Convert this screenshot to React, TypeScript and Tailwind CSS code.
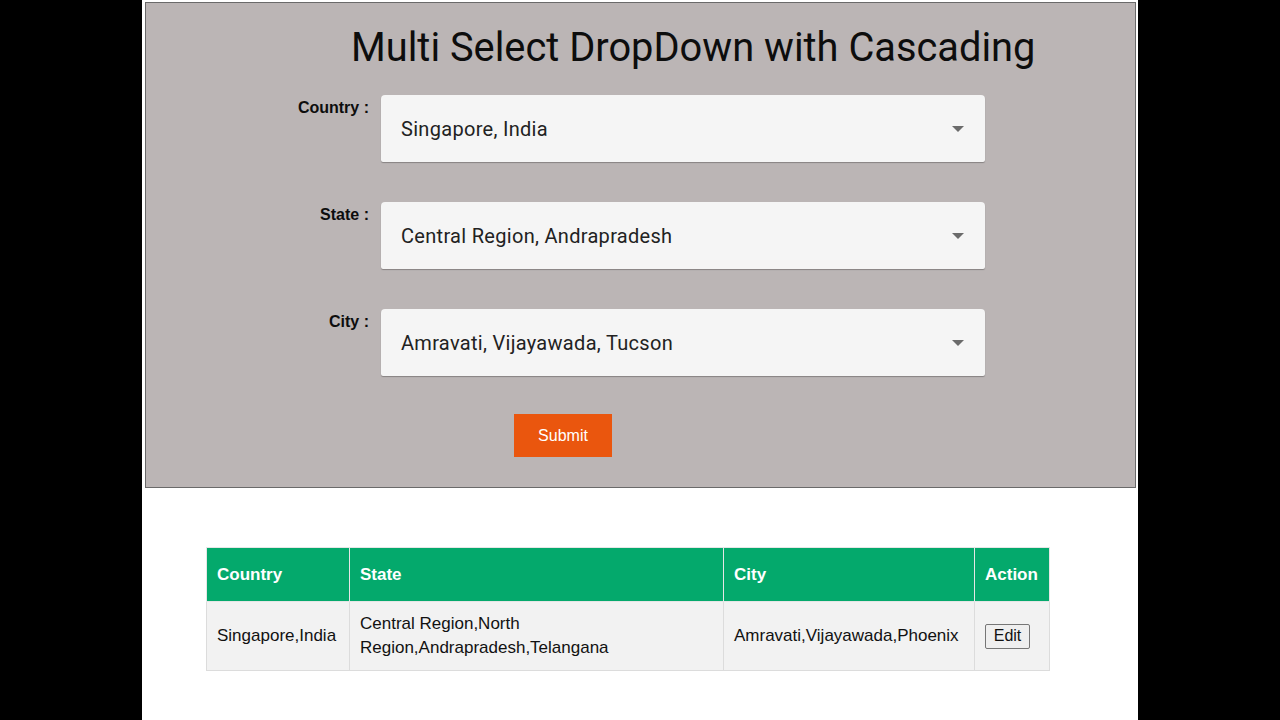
import { useState } from "react";

const fields = [
  { label: "Country :", value: "Singapore, India" },
  { label: "State :", value: "Central Region, Andrapradesh" },
  { label: "City :", value: "Amravati, Vijayawada, Tucson" },
];

const rows = [
  {
    country: "Singapore,India",
    state: "Central Region,North Region,Andrapradesh,Telangana",
    city: "Amravati,Vijayawada,Phoenix",
  },
];

function SelectBox({ value }: { value: string }) {
  return (
    <div className="flex h-[67px] w-[604px] items-center rounded-t-[4px] rounded-b-[2px] bg-[#f5f5f5] pl-[20px] pr-[21px] shadow-[0_1px_1px_rgba(0,0,0,0.28)]">
      <span className="flex-1 font-['Roboto',sans-serif] text-[20px] tracking-[0.3px] text-[#222]">
        {value}
      </span>
      <svg width="12" height="6" viewBox="0 0 12 6" className="mt-[1px]">
        <path d="M0 0 L12 0 L6 6 Z" fill="#6b6b6b" />
      </svg>
    </div>
  );
}

export default function App() {
  const [submitted] = useState(true);

  return (
    <div className="min-h-screen bg-black">
      <div className="ml-[142px] h-[720px] w-[996px] bg-white pt-[2px]">
        {/* Form panel */}
        <div className="ml-[3px] h-[486px] w-[991px] border border-[#6a6a6a] bg-[#bbb5b5]">
          <h1 className="mt-[21px] pl-[205px] font-['Roboto',sans-serif] text-[39.8px] font-normal leading-[48px] text-[#0d0d0d]">
            Multi Select DropDown with Cascading
          </h1>

          <div className="mt-[23px] flex flex-col gap-[40px]">
            {fields.map((f) => (
              <div key={f.label} className="flex">
                <label className="w-[223px] pt-[1px] text-right font-['Liberation_Sans',Arial,sans-serif] text-[16px] font-bold text-[#0d0d0d]">
                  {f.label}
                </label>
                <div className="ml-[12px]">
                  <SelectBox value={f.value} />
                </div>
              </div>
            ))}
          </div>

          <button className="ml-[368px] mt-[38px] h-[43px] w-[98px] bg-[#ea560e] font-['Liberation_Sans',Arial,sans-serif] text-[16px] text-white">
            Submit
          </button>
        </div>

        {/* Result table */}
        {submitted && (
          <table className="ml-[64px] mt-[59px] w-[843px] table-fixed border-collapse font-['Liberation_Sans',Arial,sans-serif] text-[17px]">
            <thead>
              <tr className="h-[54px] bg-[#04a96c] text-left text-white">
                <th className="w-[143px] border border-[#e6e6e6] px-[10px] font-bold">Country</th>
                <th className="w-[374px] border border-[#e6e6e6] px-[10px] font-bold">State</th>
                <th className="w-[251px] border border-[#e6e6e6] px-[10px] font-bold">City</th>
                <th className="w-[75px] border border-[#e6e6e6] px-[10px] font-bold">Action</th>
              </tr>
            </thead>
            <tbody>
              {rows.map((r) => (
                <tr key={r.country} className="h-[69px] bg-[#f2f2f2] text-[#111]">
                  <td className="border border-[#dcdcdc] px-[10px] leading-[24px]">{r.country}</td>
                  <td className="border border-[#dcdcdc] px-[10px] py-[10px] leading-[24px]">{r.state}</td>
                  <td className="border border-[#dcdcdc] px-[10px] leading-[24px]">{r.city}</td>
                  <td className="border border-[#dcdcdc] px-[10px]">
                    <button className="h-[25px] w-[45px] rounded-[2px] border border-[#767676] bg-[#efefef] text-[16px] leading-none text-[#111]">
                      Edit
                    </button>
                  </td>
                </tr>
              ))}
            </tbody>
          </table>
        )}
      </div>
    </div>
  );
}
